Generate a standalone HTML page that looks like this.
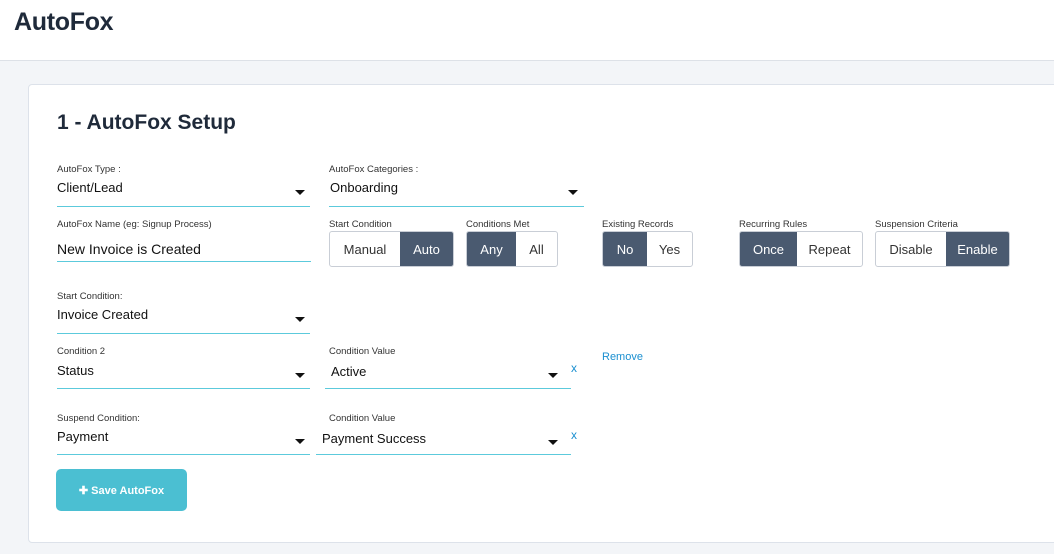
<!DOCTYPE html>
<html><head><meta charset="utf-8"><style>
*{box-sizing:border-box;margin:0;padding:0}
body{width:1054px;height:554px;overflow:hidden;background:#f3f5f8;font-family:"Liberation Sans",sans-serif;color:#222;position:relative}
.hdr{position:absolute;left:0;top:0;width:1054px;height:61px;background:#fff;border-bottom:1px solid #dde1e7}
.hdr h1{position:absolute;left:14px;top:8px;font-size:25px;font-weight:bold;color:#1f2a3a;letter-spacing:-0.3px}
.card{position:absolute;left:28px;top:84px;width:1040px;height:459px;background:#fff;border:1px solid #dde2ea;border-radius:4px}
.t{position:absolute;left:57px;top:111px;font-size:21px;font-weight:bold;color:#1f2a3a}
.a{position:absolute}
.lb{font-size:9.5px;color:#333}
.v{font-size:13px;color:#111}
.ln{position:absolute;height:1px;background:#5ccadc}
.car{position:absolute;width:0;height:0;border-left:5px solid transparent;border-right:5px solid transparent;border-top:5px solid #111}
.grp{position:absolute;top:231px;height:36px;display:flex;border:1px solid #c9ced6;border-radius:3px;overflow:hidden;font-size:13px}
.grp div{display:flex;align-items:center;justify-content:center;color:#333}
.grp .on{background:#4a5a70;color:#fff}
.x{position:absolute;color:#1a8fd0;font-size:12px}
.btn{position:absolute;left:56px;top:469px;width:131px;height:42px;background:#4bbfd2;border-radius:5px;color:#fff;font-size:11px;font-weight:bold;display:flex;align-items:center;justify-content:center}
</style></head><body>
<div class="hdr"><h1>AutoFox</h1></div>
<div class="card"></div>
<div class="t">1 - AutoFox Setup</div>

<div class="a lb" style="left:57px;top:164px">AutoFox Type :</div>
<div class="a v" style="left:57px;top:180px">Client/Lead</div>
<div class="car" style="left:295px;top:190px"></div>
<div class="ln" style="left:57px;top:206px;width:253px"></div>

<div class="a lb" style="left:329px;top:164px">AutoFox Categories :</div>
<div class="a v" style="left:330px;top:180px">Onboarding</div>
<div class="car" style="left:568px;top:190px"></div>
<div class="ln" style="left:329px;top:206px;width:255px"></div>

<div class="a lb" style="left:57px;top:219px">AutoFox Name (eg: Signup Process)</div>
<div class="a v" style="left:57px;top:241px;font-size:14px">New Invoice is Created</div>
<div class="ln" style="left:57px;top:261px;width:254px"></div>

<div class="a lb" style="left:329px;top:219px">Start Condition</div>
<div class="grp" style="left:329px;width:125px"><div style="width:70px">Manual</div><div class="on" style="flex:1">Auto</div></div>
<div class="a lb" style="left:466px;top:219px">Conditions Met</div>
<div class="grp" style="left:466px;width:92px"><div class="on" style="width:49px">Any</div><div style="flex:1">All</div></div>
<div class="a lb" style="left:602px;top:219px">Existing Records</div>
<div class="grp" style="left:602px;width:91px"><div class="on" style="width:44px">No</div><div style="flex:1">Yes</div></div>
<div class="a lb" style="left:739px;top:219px">Recurring Rules</div>
<div class="grp" style="left:739px;width:124px"><div class="on" style="width:57px">Once</div><div style="flex:1">Repeat</div></div>
<div class="a lb" style="left:875px;top:219px">Suspension Criteria</div>
<div class="grp" style="left:875px;width:135px"><div style="width:70px">Disable</div><div class="on" style="flex:1">Enable</div></div>

<div class="a lb" style="left:57px;top:291px">Start Condition:</div>
<div class="a v" style="left:57px;top:307px">Invoice Created</div>
<div class="car" style="left:295px;top:317px"></div>
<div class="ln" style="left:57px;top:333px;width:253px"></div>

<div class="a lb" style="left:57px;top:346px">Condition 2</div>
<div class="a v" style="left:57px;top:363px">Status</div>
<div class="car" style="left:295px;top:373px"></div>
<div class="ln" style="left:57px;top:388px;width:253px"></div>

<div class="a lb" style="left:329px;top:346px">Condition Value</div>
<div class="a v" style="left:331px;top:364px">Active</div>
<div class="car" style="left:548px;top:373px"></div>
<div class="ln" style="left:325px;top:388px;width:246px"></div>
<div class="x" style="left:571px;top:361px">x</div>
<div class="a" style="left:602px;top:351px;font-size:11px;color:#1a8fd0">Remove</div>

<div class="a lb" style="left:57px;top:413px">Suspend Condition:</div>
<div class="a v" style="left:57px;top:429px">Payment</div>
<div class="car" style="left:295px;top:439px"></div>
<div class="ln" style="left:57px;top:454px;width:253px"></div>

<div class="a lb" style="left:329px;top:413px">Condition Value</div>
<div class="a v" style="left:322px;top:431px">Payment Success</div>
<div class="car" style="left:548px;top:440px"></div>
<div class="ln" style="left:316px;top:454px;width:255px"></div>
<div class="x" style="left:571px;top:428px">x</div>

<div class="btn">✚ Save AutoFox</div>
</body></html>
